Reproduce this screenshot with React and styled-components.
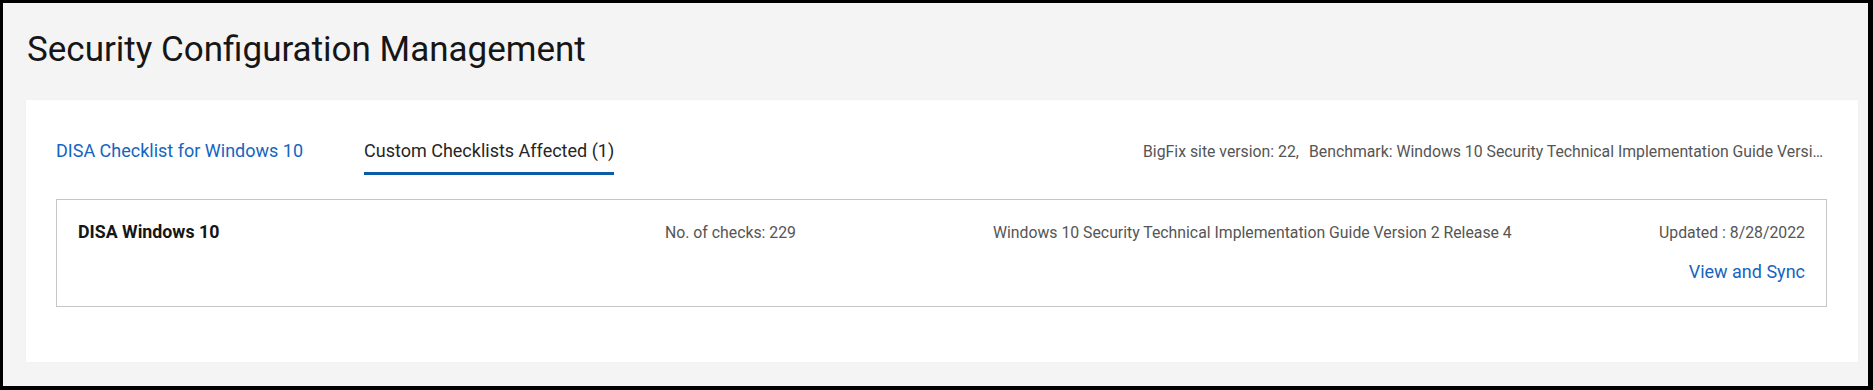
import styled, { createGlobalStyle } from "styled-components";

const GlobalStyle = createGlobalStyle`
  * { box-sizing: border-box; }
  html, body { margin: 0; padding: 0; }
  body {
    font-family: Roboto, "Liberation Sans", Arial, sans-serif;
    background: #000;
  }
`;

const checklist = {
  name: "DISA Windows 10",
  checks: 229,
  description:
    "Windows 10 Security Technical Implementation Guide Version 2 Release 4",
  updated: "8/28/2022",
};

const App = () => {
  return (
    <>
      <GlobalStyle />
      <Frame>
        <Title>Security Configuration Management</Title>
        <Card>
          <TabBar>
            <Tab>DISA Checklist for Windows 10</Tab>
            <Tab $active>Custom Checklists Affected (1)</Tab>
            <SiteInfo>
              <span>BigFix site version: 22,</span>
              <span className="bench">
                Benchmark: Windows 10 Security Technical Implementation Guide
                Version 2 Release 4
              </span>
            </SiteInfo>
          </TabBar>
          <ChecklistBox>
            <Row>
              <Name>{checklist.name}</Name>
              <Meta>No. of checks: {checklist.checks}</Meta>
              <Meta>{checklist.description}</Meta>
              <Meta className="updated">Updated : {checklist.updated}</Meta>
            </Row>
            <Actions>
              <LinkButton type="button">View and Sync</LinkButton>
            </Actions>
          </ChecklistBox>
        </Card>
      </Frame>
    </>
  );
};

const Frame = styled.div`
  width: 1873px;
  height: 390px;
  background: #f4f4f4;
  border-style: solid;
  border-color: #000;
  border-width: 3px 5px 4px 3px;
  padding: 27px 10px 0 23px;
`;

const Title = styled.h1`
  margin: 0 0 30px 1px;
  font-size: 35px;
  line-height: 40px;
  font-weight: 400;
  color: #161616;
`;

const Card = styled.section`
  background: #fff;
  padding: 39px 31px 55px 30px;
  box-shadow: 0 0 1px rgba(0, 0, 0, 0.06);
`;

const TabBar = styled.div`
  display: flex;
  align-items: flex-start;
  gap: 61px;
  margin-bottom: 24px;
`;

const Tab = styled.button`
  border: none;
  background: none;
  padding: 0 0 9px;
  margin: 0;
  font-family: inherit;
  font-size: 18px;
  line-height: 24px;
  color: ${(p) => (p.$active ? "#262626" : "#1565c0")};
  border-bottom: 3px solid ${(p) => (p.$active ? "#0b5ca8" : "transparent")};
  cursor: pointer;
`;

const SiteInfo = styled.div`
  margin-left: auto;
  margin-top: 3px;
  max-width: 684px;
  font-size: 15.8px;
  line-height: 20px;
  color: #555;
  white-space: nowrap;
  overflow: hidden;
  text-overflow: ellipsis;

  .bench {
    margin-left: 10px;
  }
`;

const ChecklistBox = styled.div`
  border: 1px solid #c6c6c6;
  padding: 21px 21px 22px 21px;
`;

const Row = styled.div`
  display: grid;
  grid-template-columns: 587px 328px 1fr auto;
  align-items: baseline;

  .updated {
    text-align: right;
  }
`;

const Name = styled.h4`
  margin: 0;
  font-size: 17.8px;
  line-height: 22px;
  font-weight: 700;
  color: #161616;
`;

const Meta = styled.span`
  font-size: 15.8px;
  line-height: 20px;
  color: #555;
`;

const Actions = styled.div`
  display: flex;
  justify-content: flex-end;
  margin-top: 17px;
`;

const LinkButton = styled.button`
  border: none;
  background: none;
  padding: 0;
  font-family: inherit;
  font-size: 18px;
  line-height: 24px;
  color: #1565c0;
  cursor: pointer;
`;

export default App;
